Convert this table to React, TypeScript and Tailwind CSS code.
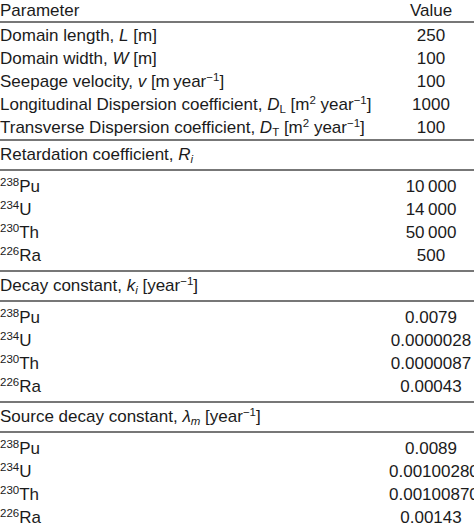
import type { ReactNode } from 'react';

type Row = { label: ReactNode; value: string };

// spans instead of <sup>/<sub> so preflight offsets don't stack up
const Sup = ({ children }: { children: ReactNode }) => (
  <span className="relative -top-[6px] text-[11.5px] leading-none">{children}</span>
);

const Sub = ({ children }: { children: ReactNode }) => (
  <span className="relative top-[3px] text-[11.5px] leading-none">{children}</span>
);

const Iso = ({ mass, el }: { mass: string; el: string }) => (
  <span>
    <Sup>{mass}</Sup>
    {el}
  </span>
);

const PARAMS: Row[] = [
  {
    label: (
      <>
        Domain length, <i>L</i> [m]
      </>
    ),
    value: '250',
  },
  {
    label: (
      <>
        Domain width, <i>W</i> [m]
      </>
    ),
    value: '100',
  },
  {
    label: (
      <>
        Seepage velocity, <i>v</i> [m{'\u2009'}year<Sup>−1</Sup>]
      </>
    ),
    value: '100',
  },
  {
    label: (
      <>
        Longitudinal Dispersion coefficient, <i>D</i>
        <Sub>L</Sub> [m<Sup>2</Sup> year<Sup>−1</Sup>]
      </>
    ),
    value: '1000',
  },
  {
    label: (
      <>
        Transverse Dispersion coefficient, <i>D</i>
        <Sub>T</Sub> [m<Sup>2</Sup> year<Sup>−1</Sup>]
      </>
    ),
    value: '100',
  },
];

const SECTIONS: { title: ReactNode; values: string[] }[] = [
  {
    title: (
      <>
        Retardation coefficient, <i>R</i>
        <Sub>
          <i>i</i>
        </Sub>
      </>
    ),
    values: ['10\u2009000', '14\u2009000', '50\u2009000', '500'],
  },
  {
    title: (
      <>
        Decay constant, <i>k</i>
        <Sub>
          <i>i</i>
        </Sub>{' '}
        [year<Sup>−1</Sup>]
      </>
    ),
    values: ['0.0079', '0.0000028', '0.0000087', '0.00043'],
  },
  {
    title: (
      <>
        Source decay constant, <i>λ</i>
        <Sub>
          <i>m</i>
        </Sub>{' '}
        [year<Sup>−1</Sup>]
      </>
    ),
    values: ['0.0089', '0.00100280', '0.00100870', '0.00143'],
  },
];

const ISOTOPES = [
  ['238', 'Pu'],
  ['234', 'U'],
  ['230', 'Th'],
  ['226', 'Ra'],
];

function TableRow({ label, value, h = 'h-[23px]' }: { label: ReactNode; value: string; h?: string }) {
  return (
    <div className={`flex items-center ${h}`}>
      <div className="flex-1 whitespace-nowrap">{label}</div>
      <div className="mr-[1px] w-[84px] text-center whitespace-nowrap">{value}</div>
    </div>
  );
}

export default function App() {
  return (
    <div
      className="h-[529px] w-[474px] overflow-hidden bg-white text-[17px] leading-none text-[#1b1b1b]"
      style={{ fontFamily: '"Liberation Sans", Arial, sans-serif' }}
    >
      {/* Header */}
      <div className="border-b-2 border-[#777]">
        <TableRow label="Parameter" value="Value" h="h-[21px]" />
      </div>

      {/* Flow parameters */}
      <div className="border-b-2 border-[#777] pt-[1px]">
        {PARAMS.map((p, i) => (
          <TableRow key={i} label={p.label} value={p.value} />
        ))}
      </div>

      {SECTIONS.map((s, si) => (
        <div key={si}>
          <div className="flex h-[30px] items-center border-b-2 border-[#777] pb-[2px]">
            <span className="whitespace-nowrap">{s.title}</span>
          </div>
          <div className="border-b-2 border-[#777] pt-[4px] pb-[3px]">
            {ISOTOPES.map(([mass, el], i) => (
              <TableRow key={el} label={<Iso mass={mass} el={el} />} value={s.values[i]} />
            ))}
          </div>
        </div>
      ))}
    </div>
  );
}
